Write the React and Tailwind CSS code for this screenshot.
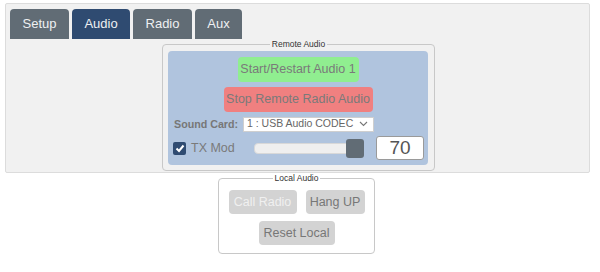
const tabs = [
  { label: 'Setup', width: 'w-[59px]' },
  { label: 'Audio', width: 'w-[58px]', active: true },
  { label: 'Radio', width: 'w-[59px]' },
  { label: 'Aux', width: 'w-[47px]' },
];

function Legend({ children }) {
  return (
    <legend className="mx-auto px-[2px] text-[8.5px] leading-[10px] text-[#333]">{children}</legend>
  );
}

export default function App() {
  return (
    <div className="h-[272px] w-[600px] bg-white pl-[5px] pt-[3px] font-['Liberation_Sans',Arial,sans-serif]">
      <div className="w-[585px] rounded-[2px] border border-[#dcdcdc] bg-[#f1f1f1] pl-[4px] pt-[5px] pb-[1px]">
        <div className="flex gap-[3px]">
          {tabs.map((tab) => (
            <div
              key={tab.label}
              className={`flex h-[30px] items-center justify-center rounded-t-[4px] text-[13px] text-[#eef0f2] ${tab.width} ${
                tab.active ? 'bg-[#2f4b71]' : 'bg-[#616c75]'
              }`}
            >
              {tab.label}
            </div>
          ))}
        </div>

        <fieldset className="ml-[152px] w-[273px] rounded-[4px] border border-[#c8c8c8] px-[5px] pb-[5px]">
          <Legend>Remote Audio</Legend>
          <div className="mt-[2px] flex w-[260px] flex-col items-center gap-[5px] rounded-[4px] bg-[#b0c4de] pt-[6px] pb-[5px]">
            <div className="flex h-[25px] w-[121px] shrink-0 items-center justify-center whitespace-nowrap rounded-[4px] bg-[#90ee90] text-[12.5px] text-[#7a7a7a]">
              Start/Restart Audio 1
            </div>
            <div className="flex h-[25px] w-[149px] shrink-0 items-center justify-center whitespace-nowrap rounded-[4px] bg-[#f08080] text-[12.5px] text-[#7a7a7a]">
              Stop Remote Radio Audio
            </div>
            <div className="-mt-[1px] flex w-full items-center gap-[5px] pl-[6px]">
              <span className="w-[64px] whitespace-nowrap text-[10.7px] font-bold text-[#777]">Sound Card:</span>
              <div className="flex h-[15px] w-[131px] items-center justify-between border border-[#cfcfcf] bg-white pl-[3px] pr-[5px] text-[10.5px] text-[#666]">
                <span className="whitespace-nowrap">1 : USB Audio CODEC</span>
                <svg width="9" height="6" viewBox="0 0 9 6" fill="none" stroke="#777" strokeWidth="1.1">
                  <path d="M1 1l3.5 3.5L8 1" />
                </svg>
              </div>
            </div>
            <div className="-mt-[1px] flex w-full items-center pl-[5px] pr-[4px]">
              <div className="flex h-[13px] w-[13px] items-center justify-center rounded-[2px] bg-[#2f4b71]">
                <svg width="10" height="9" viewBox="0 0 10 9" fill="none" stroke="white" strokeWidth="2">
                  <path d="M1.5 4.5l2.5 2.5L8.5 1.5" />
                </svg>
              </div>
              <span className="ml-[5px] w-[63px] text-[12.5px] text-[#7a7a7a]">TX Mod</span>
              <div className="relative flex h-[19px] w-[110px] items-center">
                <div className="h-[11px] w-full rounded-[4px] border border-[#d8d8d8] bg-[#efefef]" />
                <div className="absolute right-0 top-0 h-[19px] w-[18px] rounded-[3px] bg-[#616c75]" />
              </div>
              <div className="ml-auto flex h-[24px] w-[48px] items-center justify-center rounded-[3px] border border-[#9a9a9a] bg-white text-[19px] text-[#555]">
                70
              </div>
            </div>
          </div>
        </fieldset>
      </div>

      <fieldset className="ml-[213px] w-[157px] rounded-[4px] border border-[#c8c8c8] pb-[8px]">
        <Legend>Local Audio</Legend>
        <div className="mt-[7px] flex flex-col items-center gap-[7px]">
          <div className="flex gap-[9px]">
            <div className="flex h-[24px] w-[68px] items-center justify-center whitespace-nowrap rounded-[4px] bg-[#d3d3d3] text-[12.5px] text-[#f0f0f0]">
              Call Radio
            </div>
            <div className="flex h-[24px] w-[59px] items-center justify-center whitespace-nowrap rounded-[4px] bg-[#d3d3d3] text-[12.5px] text-[#777]">
              Hang UP
            </div>
          </div>
          <div className="flex h-[24px] w-[76px] items-center justify-center whitespace-nowrap rounded-[4px] bg-[#d3d3d3] text-[12.5px] text-[#777]">
            Reset Local
          </div>
        </div>
      </fieldset>
    </div>
  );
}
